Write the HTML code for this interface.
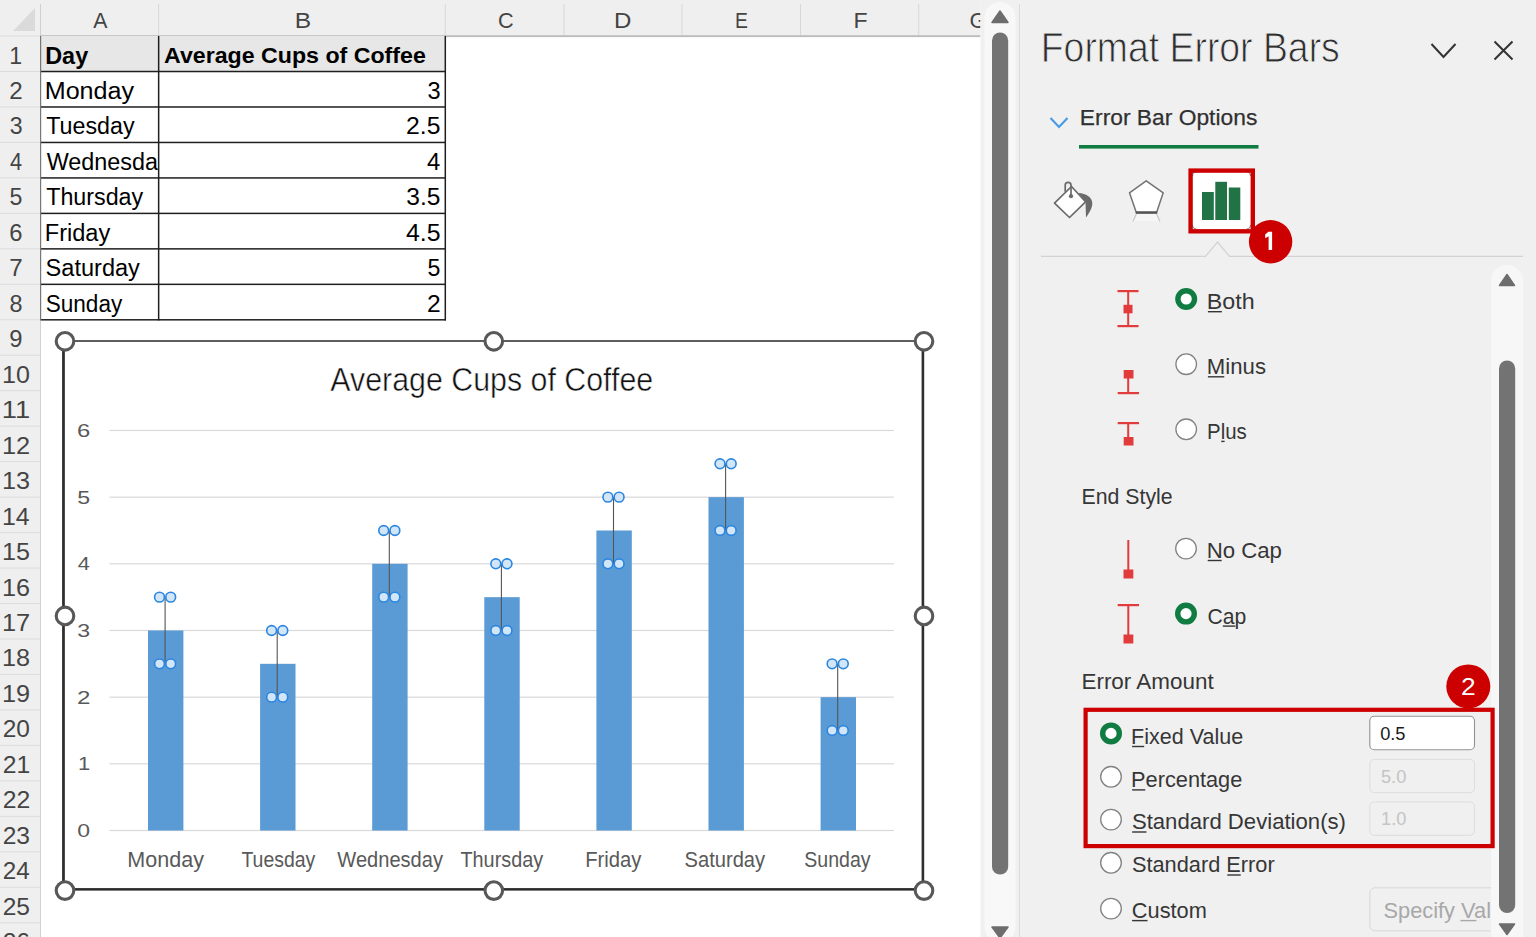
<!DOCTYPE html>
<html><head><meta charset="utf-8"><title>Format Error Bars</title>
<style>html,body{margin:0;padding:0;width:1536px;height:937px;overflow:hidden;background:#fff;font-family:"Liberation Sans", sans-serif}</style>
</head><body><svg width="1536" height="937" viewBox="0 0 1536 937" style="display:block;font-family:'Liberation Sans', sans-serif"><rect x="0" y="0" width="980.5" height="937" fill="#ffffff"/><rect x="0" y="0" width="980.5" height="36.0" fill="#efefef"/><rect x="0" y="0" width="40.5" height="937" fill="#efefef"/><polygon points="13,31 35,8 35,31" fill="#dadada"/><rect x="158.1" y="4" width="1" height="32.0" fill="#d8d8d8"/><rect x="444.75" y="4" width="1" height="32.0" fill="#d8d8d8"/><rect x="563.5" y="4" width="1" height="32.0" fill="#d8d8d8"/><rect x="681.5" y="4" width="1" height="32.0" fill="#d8d8d8"/><rect x="800.0" y="4" width="1" height="32.0" fill="#d8d8d8"/><rect x="918.25" y="4" width="1" height="32.0" fill="#d8d8d8"/><rect x="40" y="4" width="1" height="937" fill="#d0d0d0"/><rect x="40" y="35.2" width="940.5" height="1.9" fill="#bdbdbd"/><rect x="0" y="35.5" width="40" height="1" fill="#dcdcdc"/><rect x="0" y="70.97" width="40" height="1" fill="#dcdcdc"/><rect x="0" y="106.44" width="40" height="1" fill="#dcdcdc"/><rect x="0" y="141.91" width="40" height="1" fill="#dcdcdc"/><rect x="0" y="177.38" width="40" height="1" fill="#dcdcdc"/><rect x="0" y="212.85" width="40" height="1" fill="#dcdcdc"/><rect x="0" y="248.32" width="40" height="1" fill="#dcdcdc"/><rect x="0" y="283.78999999999996" width="40" height="1" fill="#dcdcdc"/><rect x="0" y="319.26" width="40" height="1" fill="#dcdcdc"/><rect x="0" y="354.73" width="40" height="1" fill="#dcdcdc"/><rect x="0" y="390.2" width="40" height="1" fill="#dcdcdc"/><rect x="0" y="425.66999999999996" width="40" height="1" fill="#dcdcdc"/><rect x="0" y="461.14" width="40" height="1" fill="#dcdcdc"/><rect x="0" y="496.61" width="40" height="1" fill="#dcdcdc"/><rect x="0" y="532.0799999999999" width="40" height="1" fill="#dcdcdc"/><rect x="0" y="567.55" width="40" height="1" fill="#dcdcdc"/><rect x="0" y="603.02" width="40" height="1" fill="#dcdcdc"/><rect x="0" y="638.49" width="40" height="1" fill="#dcdcdc"/><rect x="0" y="673.96" width="40" height="1" fill="#dcdcdc"/><rect x="0" y="709.43" width="40" height="1" fill="#dcdcdc"/><rect x="0" y="744.9" width="40" height="1" fill="#dcdcdc"/><rect x="0" y="780.37" width="40" height="1" fill="#dcdcdc"/><rect x="0" y="815.8399999999999" width="40" height="1" fill="#dcdcdc"/><rect x="0" y="851.31" width="40" height="1" fill="#dcdcdc"/><rect x="0" y="886.78" width="40" height="1" fill="#dcdcdc"/><rect x="0" y="922.25" width="40" height="1" fill="#dcdcdc"/><rect x="0" y="957.72" width="40" height="1" fill="#dcdcdc"/><text x="93.25" y="27.5" font-size="22.9" fill="#444444" font-weight="400" textLength="14.20" lengthAdjust="spacingAndGlyphs" >A</text><text x="294.77" y="27.5" font-size="22.9" fill="#444444" font-weight="400" textLength="16.41" lengthAdjust="spacingAndGlyphs" >B</text><text x="497.92" y="27.5" font-size="22.9" fill="#444444" font-weight="400" textLength="15.64" lengthAdjust="spacingAndGlyphs" >C</text><text x="614.02" y="27.5" font-size="22.9" fill="#444444" font-weight="400" textLength="17.37" lengthAdjust="spacingAndGlyphs" >D</text><text x="734.90" y="27.5" font-size="22.9" fill="#444444" font-weight="400" textLength="12.91" lengthAdjust="spacingAndGlyphs" >E</text><text x="853.60" y="27.5" font-size="22.9" fill="#444444" font-weight="400" textLength="14.10" lengthAdjust="spacingAndGlyphs" >F</text><clipPath id="cpg"><rect x="940" y="0" width="40.5" height="36"/></clipPath><text x="969.39" y="27.5" font-size="22.9" fill="#444444" font-weight="400" textLength="17.29" lengthAdjust="spacingAndGlyphs" clip-path="url(#cpg)">G</text><text x="9.27" y="63.5" font-size="23.5" fill="#444444" font-weight="400" textLength="12.86" lengthAdjust="spacingAndGlyphs" >1</text><text x="9.29" y="98.97" font-size="23.5" fill="#444444" font-weight="400" textLength="13.45" lengthAdjust="spacingAndGlyphs" >2</text><text x="9.63" y="134.44" font-size="23.5" fill="#444444" font-weight="400" textLength="12.88" lengthAdjust="spacingAndGlyphs" >3</text><text x="10.01" y="169.91" font-size="23.5" fill="#444444" font-weight="400" textLength="12.11" lengthAdjust="spacingAndGlyphs" >4</text><text x="9.57" y="205.38" font-size="23.5" fill="#444444" font-weight="400" textLength="12.88" lengthAdjust="spacingAndGlyphs" >5</text><text x="9.31" y="240.85" font-size="23.5" fill="#444444" font-weight="400" textLength="13.23" lengthAdjust="spacingAndGlyphs" >6</text><text x="9.29" y="276.32" font-size="23.5" fill="#444444" font-weight="400" textLength="13.45" lengthAdjust="spacingAndGlyphs" >7</text><text x="9.51" y="311.79" font-size="23.5" fill="#444444" font-weight="400" textLength="13.02" lengthAdjust="spacingAndGlyphs" >8</text><text x="9.37" y="347.26" font-size="23.5" fill="#444444" font-weight="400" textLength="13.23" lengthAdjust="spacingAndGlyphs" >9</text><text x="2.02" y="382.73" font-size="23.5" fill="#444444" font-weight="400" textLength="27.88" lengthAdjust="spacingAndGlyphs" >10</text><text x="1.85" y="418.2" font-size="23.5" fill="#444444" font-weight="400" textLength="28.36" lengthAdjust="spacingAndGlyphs" >11</text><text x="2.00" y="453.67" font-size="23.5" fill="#444444" font-weight="400" textLength="28.23" lengthAdjust="spacingAndGlyphs" >12</text><text x="2.01" y="489.14" font-size="23.5" fill="#444444" font-weight="400" textLength="28.02" lengthAdjust="spacingAndGlyphs" >13</text><text x="2.04" y="524.61" font-size="23.5" fill="#444444" font-weight="400" textLength="27.60" lengthAdjust="spacingAndGlyphs" >14</text><text x="2.02" y="560.08" font-size="23.5" fill="#444444" font-weight="400" textLength="27.95" lengthAdjust="spacingAndGlyphs" >15</text><text x="2.01" y="595.55" font-size="23.5" fill="#444444" font-weight="400" textLength="28.02" lengthAdjust="spacingAndGlyphs" >16</text><text x="2.00" y="631.02" font-size="23.5" fill="#444444" font-weight="400" textLength="28.23" lengthAdjust="spacingAndGlyphs" >17</text><text x="2.01" y="666.49" font-size="23.5" fill="#444444" font-weight="400" textLength="28.02" lengthAdjust="spacingAndGlyphs" >18</text><text x="2.01" y="701.96" font-size="23.5" fill="#444444" font-weight="400" textLength="28.09" lengthAdjust="spacingAndGlyphs" >19</text><text x="2.68" y="737.43" font-size="23.5" fill="#444444" font-weight="400" textLength="27.20" lengthAdjust="spacingAndGlyphs" >20</text><text x="2.67" y="772.9" font-size="23.5" fill="#444444" font-weight="400" textLength="27.47" lengthAdjust="spacingAndGlyphs" >21</text><text x="2.66" y="808.37" font-size="23.5" fill="#444444" font-weight="400" textLength="27.53" lengthAdjust="spacingAndGlyphs" >22</text><text x="2.67" y="843.84" font-size="23.5" fill="#444444" font-weight="400" textLength="27.33" lengthAdjust="spacingAndGlyphs" >23</text><text x="2.69" y="879.31" font-size="23.5" fill="#444444" font-weight="400" textLength="26.93" lengthAdjust="spacingAndGlyphs" >24</text><text x="2.67" y="914.78" font-size="23.5" fill="#444444" font-weight="400" textLength="27.26" lengthAdjust="spacingAndGlyphs" >25</text><text x="2.67" y="950.25" font-size="23.5" fill="#444444" font-weight="400" textLength="27.33" lengthAdjust="spacingAndGlyphs" >26</text><rect x="40.5" y="36.0" width="404.75" height="35.47" fill="#e7e7e7"/><rect x="40.5" y="70.77" width="405.45" height="1.5" fill="#1f1f1f"/><rect x="40.5" y="106.24" width="405.45" height="1.5" fill="#1f1f1f"/><rect x="40.5" y="141.71" width="405.45" height="1.5" fill="#1f1f1f"/><rect x="40.5" y="177.18" width="405.45" height="1.5" fill="#1f1f1f"/><rect x="40.5" y="212.65" width="405.45" height="1.5" fill="#1f1f1f"/><rect x="40.5" y="248.12" width="405.45" height="1.5" fill="#1f1f1f"/><rect x="40.5" y="283.59" width="405.45" height="1.5" fill="#1f1f1f"/><rect x="40.5" y="319.06" width="405.45" height="1.5" fill="#1f1f1f"/><rect x="157.9" y="36.0" width="1.5" height="284.46" fill="#1f1f1f"/><rect x="444.55" y="36.0" width="1.5" height="284.46" fill="#1f1f1f"/><rect x="40" y="36.0" width="1.2" height="283.76" fill="#777"/><text x="45.22" y="63.6" font-size="23.0" fill="#000" font-weight="700" textLength="42.94" lengthAdjust="spacingAndGlyphs" >Day</text><text x="164.02" y="62.6" font-size="22.8" fill="#000" font-weight="700" textLength="261.76" lengthAdjust="spacingAndGlyphs" >Average Cups of Coffee</text><text x="44.73" y="98.97" font-size="23.3" fill="#000" font-weight="400" textLength="89.34" lengthAdjust="spacingAndGlyphs" >Monday</text><text x="427.42" y="98.97" font-size="23.0" fill="#000" font-weight="400" textLength="13.11" lengthAdjust="spacingAndGlyphs" >3</text><text x="46.28" y="134.44" font-size="23.3" fill="#000" font-weight="400" textLength="88.30" lengthAdjust="spacingAndGlyphs" >Tuesday</text><text x="406.06" y="134.44" font-size="23.0" fill="#000" font-weight="400" textLength="34.43" lengthAdjust="spacingAndGlyphs" >2.5</text><clipPath id="cpw"><rect x="41" y="142.41" width="116.89999999999999" height="35.47"/></clipPath><text x="46.68" y="169.91" font-size="23.3" fill="#000" font-weight="400" textLength="111.27" lengthAdjust="spacingAndGlyphs" clip-path="url(#cpw)">Wednesda</text><text x="426.97" y="169.91" font-size="23.0" fill="#000" font-weight="400" textLength="13.22" lengthAdjust="spacingAndGlyphs" >4</text><text x="46.18" y="205.38" font-size="23.3" fill="#000" font-weight="400" textLength="97.01" lengthAdjust="spacingAndGlyphs" >Thursday</text><text x="406.38" y="205.38" font-size="23.0" fill="#000" font-weight="400" textLength="34.11" lengthAdjust="spacingAndGlyphs" >3.5</text><text x="44.75" y="240.85" font-size="23.3" fill="#000" font-weight="400" textLength="65.53" lengthAdjust="spacingAndGlyphs" >Friday</text><text x="405.94" y="240.85" font-size="23.0" fill="#000" font-weight="400" textLength="34.56" lengthAdjust="spacingAndGlyphs" >4.5</text><text x="45.64" y="276.32" font-size="23.3" fill="#000" font-weight="400" textLength="94.22" lengthAdjust="spacingAndGlyphs" >Saturday</text><text x="427.57" y="276.32" font-size="23.0" fill="#000" font-weight="400" textLength="12.88" lengthAdjust="spacingAndGlyphs" >5</text><text x="45.68" y="311.79" font-size="23.3" fill="#000" font-weight="400" textLength="76.55" lengthAdjust="spacingAndGlyphs" >Sunday</text><text x="427.07" y="311.79" font-size="23.0" fill="#000" font-weight="400" textLength="13.69" lengthAdjust="spacingAndGlyphs" >2</text><rect x="63.5" y="341.0" width="859.3" height="549.5" fill="#ffffff"/><rect x="62.5" y="340.1" width="861.3" height="1.8" fill="#4d4d4d"/><rect x="62.5" y="888.1" width="861.3" height="2.5" fill="#2a2a2a"/><rect x="62.1" y="341.0" width="2.75" height="549.5" fill="#2e2e2e"/><rect x="921.5999999999999" y="341.0" width="2.6" height="549.5" fill="#2e2e2e"/><text x="330.27" y="390.55" font-size="32.52727272727273" fill="#111111" font-weight="400" textLength="322.93" lengthAdjust="spacingAndGlyphs"  stroke="#ffffff" stroke-width="0.5">Average Cups of Coffee</text><rect x="109.4" y="829.9" width="784.4" height="1.2" fill="#d9d9d9"/><text x="77.28" y="837.1" font-size="19.0" fill="#595959" font-weight="400" textLength="12.81" lengthAdjust="spacingAndGlyphs" >0</text><rect x="109.4" y="763.23" width="784.4" height="1.2" fill="#d9d9d9"/><text x="78.05" y="770.43" font-size="19.0" fill="#595959" font-weight="400" textLength="12.22" lengthAdjust="spacingAndGlyphs" >1</text><rect x="109.4" y="696.56" width="784.4" height="1.2" fill="#d9d9d9"/><text x="76.99" y="703.76" font-size="19.0" fill="#595959" font-weight="400" textLength="13.45" lengthAdjust="spacingAndGlyphs" >2</text><rect x="109.4" y="629.89" width="784.4" height="1.2" fill="#d9d9d9"/><text x="77.33" y="637.09" font-size="19.0" fill="#595959" font-weight="400" textLength="12.88" lengthAdjust="spacingAndGlyphs" >3</text><rect x="109.4" y="563.2199999999999" width="784.4" height="1.2" fill="#d9d9d9"/><text x="77.71" y="570.42" font-size="19.0" fill="#595959" font-weight="400" textLength="12.11" lengthAdjust="spacingAndGlyphs" >4</text><rect x="109.4" y="496.54999999999995" width="784.4" height="1.2" fill="#d9d9d9"/><text x="77.27" y="503.75" font-size="19.0" fill="#595959" font-weight="400" textLength="12.88" lengthAdjust="spacingAndGlyphs" >5</text><rect x="109.4" y="429.88" width="784.4" height="1.2" fill="#d9d9d9"/><text x="77.01" y="437.08" font-size="19.0" fill="#595959" font-weight="400" textLength="13.23" lengthAdjust="spacingAndGlyphs" >6</text><rect x="148.0" y="630.49" width="35.4" height="200.01" fill="#5b9bd5"/><text x="127.32" y="866.6" font-size="21.3" fill="#595959" font-weight="400" textLength="76.64" lengthAdjust="spacingAndGlyphs" >Monday</text><rect x="260.09999999999997" y="663.825" width="35.4" height="166.67499999999995" fill="#5b9bd5"/><text x="241.46" y="866.6" font-size="21.3" fill="#595959" font-weight="400" textLength="73.90" lengthAdjust="spacingAndGlyphs" >Tuesday</text><rect x="372.2" y="563.8199999999999" width="35.4" height="266.68000000000006" fill="#5b9bd5"/><text x="337.30" y="866.6" font-size="21.3" fill="#595959" font-weight="400" textLength="105.66" lengthAdjust="spacingAndGlyphs" >Wednesday</text><rect x="484.29999999999995" y="597.155" width="35.4" height="233.34500000000003" fill="#5b9bd5"/><text x="460.45" y="866.6" font-size="21.3" fill="#595959" font-weight="400" textLength="82.72" lengthAdjust="spacingAndGlyphs" >Thursday</text><rect x="596.3999999999999" y="530.485" width="35.4" height="300.015" fill="#5b9bd5"/><text x="585.23" y="866.6" font-size="21.3" fill="#595959" font-weight="400" textLength="56.14" lengthAdjust="spacingAndGlyphs" >Friday</text><rect x="708.5" y="497.15" width="35.4" height="333.35" fill="#5b9bd5"/><text x="684.59" y="866.6" font-size="21.3" fill="#595959" font-weight="400" textLength="80.56" lengthAdjust="spacingAndGlyphs" >Saturday</text><rect x="820.5999999999999" y="697.16" width="35.4" height="133.34000000000003" fill="#5b9bd5"/><text x="804.32" y="866.6" font-size="21.3" fill="#595959" font-weight="400" textLength="66.21" lengthAdjust="spacingAndGlyphs" >Sunday</text><rect x="164.54999999999998" y="597.155" width="1.1" height="66.67000000000007" fill="#555555"/><circle cx="159.5" cy="597.155" r="4.9" fill="#d3e6f7" stroke="#2b86e0" stroke-width="1.6"/><circle cx="170.7" cy="597.155" r="4.9" fill="#d3e6f7" stroke="#2b86e0" stroke-width="1.6"/><circle cx="159.5" cy="663.825" r="4.9" fill="#d3e6f7" stroke="#2b86e0" stroke-width="1.6"/><circle cx="170.7" cy="663.825" r="4.9" fill="#d3e6f7" stroke="#2b86e0" stroke-width="1.6"/><rect x="276.6499999999999" y="630.49" width="1.1" height="66.66999999999996" fill="#555555"/><circle cx="271.5999999999999" cy="630.49" r="4.9" fill="#d3e6f7" stroke="#2b86e0" stroke-width="1.6"/><circle cx="282.79999999999995" cy="630.49" r="4.9" fill="#d3e6f7" stroke="#2b86e0" stroke-width="1.6"/><circle cx="271.5999999999999" cy="697.16" r="4.9" fill="#d3e6f7" stroke="#2b86e0" stroke-width="1.6"/><circle cx="282.79999999999995" cy="697.16" r="4.9" fill="#d3e6f7" stroke="#2b86e0" stroke-width="1.6"/><rect x="388.74999999999994" y="530.485" width="1.1" height="66.66999999999996" fill="#555555"/><circle cx="383.69999999999993" cy="530.485" r="4.9" fill="#d3e6f7" stroke="#2b86e0" stroke-width="1.6"/><circle cx="394.9" cy="530.485" r="4.9" fill="#d3e6f7" stroke="#2b86e0" stroke-width="1.6"/><circle cx="383.69999999999993" cy="597.155" r="4.9" fill="#d3e6f7" stroke="#2b86e0" stroke-width="1.6"/><circle cx="394.9" cy="597.155" r="4.9" fill="#d3e6f7" stroke="#2b86e0" stroke-width="1.6"/><rect x="500.8499999999999" y="563.8199999999999" width="1.1" height="66.67000000000007" fill="#555555"/><circle cx="495.7999999999999" cy="563.8199999999999" r="4.9" fill="#d3e6f7" stroke="#2b86e0" stroke-width="1.6"/><circle cx="506.99999999999994" cy="563.8199999999999" r="4.9" fill="#d3e6f7" stroke="#2b86e0" stroke-width="1.6"/><circle cx="495.7999999999999" cy="630.49" r="4.9" fill="#d3e6f7" stroke="#2b86e0" stroke-width="1.6"/><circle cx="506.99999999999994" cy="630.49" r="4.9" fill="#d3e6f7" stroke="#2b86e0" stroke-width="1.6"/><rect x="612.9499999999999" y="497.15" width="1.1" height="66.66999999999996" fill="#555555"/><circle cx="607.8999999999999" cy="497.15" r="4.9" fill="#d3e6f7" stroke="#2b86e0" stroke-width="1.6"/><circle cx="619.0999999999999" cy="497.15" r="4.9" fill="#d3e6f7" stroke="#2b86e0" stroke-width="1.6"/><circle cx="607.8999999999999" cy="563.8199999999999" r="4.9" fill="#d3e6f7" stroke="#2b86e0" stroke-width="1.6"/><circle cx="619.0999999999999" cy="563.8199999999999" r="4.9" fill="#d3e6f7" stroke="#2b86e0" stroke-width="1.6"/><rect x="725.0500000000001" y="463.815" width="1.1" height="66.67000000000002" fill="#555555"/><circle cx="720.0" cy="463.815" r="4.9" fill="#d3e6f7" stroke="#2b86e0" stroke-width="1.6"/><circle cx="731.2" cy="463.815" r="4.9" fill="#d3e6f7" stroke="#2b86e0" stroke-width="1.6"/><circle cx="720.0" cy="530.485" r="4.9" fill="#d3e6f7" stroke="#2b86e0" stroke-width="1.6"/><circle cx="731.2" cy="530.485" r="4.9" fill="#d3e6f7" stroke="#2b86e0" stroke-width="1.6"/><rect x="837.15" y="663.825" width="1.1" height="66.66999999999996" fill="#555555"/><circle cx="832.0999999999999" cy="663.825" r="4.9" fill="#d3e6f7" stroke="#2b86e0" stroke-width="1.6"/><circle cx="843.3" cy="663.825" r="4.9" fill="#d3e6f7" stroke="#2b86e0" stroke-width="1.6"/><circle cx="832.0999999999999" cy="730.495" r="4.9" fill="#d3e6f7" stroke="#2b86e0" stroke-width="1.6"/><circle cx="843.3" cy="730.495" r="4.9" fill="#d3e6f7" stroke="#2b86e0" stroke-width="1.6"/><circle cx="65.0" cy="341.3" r="8.8" fill="#ffffff" stroke="#585858" stroke-width="3.1"/><circle cx="493.8" cy="341.3" r="8.8" fill="#ffffff" stroke="#585858" stroke-width="3.1"/><circle cx="924.0" cy="341.3" r="8.8" fill="#ffffff" stroke="#585858" stroke-width="3.1"/><circle cx="65.0" cy="615.95" r="8.8" fill="#ffffff" stroke="#585858" stroke-width="3.1"/><circle cx="924.0" cy="615.95" r="8.8" fill="#ffffff" stroke="#585858" stroke-width="3.1"/><circle cx="65.0" cy="890.6" r="8.8" fill="#ffffff" stroke="#585858" stroke-width="3.1"/><circle cx="493.8" cy="890.6" r="8.8" fill="#ffffff" stroke="#585858" stroke-width="3.1"/><circle cx="924.0" cy="890.6" r="8.8" fill="#ffffff" stroke="#585858" stroke-width="3.1"/><rect x="980.5" y="0" width="39.0" height="937" fill="#f0f0f0"/><rect x="984.5" y="2" width="31" height="940" rx="15.5" fill="#f8f8f8"/><polygon points="1000,11 1008,22.5 992,22.5" fill="#6d6d6d" stroke="#6d6d6d" stroke-width="1.5" stroke-linejoin="round"/><rect x="992" y="32.5" width="16.2" height="842" rx="8.1" fill="#737373"/><polygon points="992,927 1008,927 1000,938" fill="#6d6d6d" stroke="#6d6d6d" stroke-width="1.5" stroke-linejoin="round"/><rect x="1019.5" y="0" width="516.5" height="937" fill="#f0f0f0"/><rect x="1019" y="4" width="1" height="937" fill="#dadada"/><text x="1040.77" y="62.35" font-size="41.60909090909091" fill="#2e2e2e" font-weight="400" textLength="299.03" lengthAdjust="spacingAndGlyphs"  stroke="#f0f0f0" stroke-width="0.9">Format Error Bars</text><polyline points="1431.5,44 1443.5,57 1455.5,44" fill="none" stroke="#333" stroke-width="2"/><path d="M1494.5,41.5 L1512.5,59.5 M1512.5,41.5 L1494.5,59.5" stroke="#333" stroke-width="2"/><polyline points="1050.5,118 1059,127 1067.5,118" fill="none" stroke="#4a9be6" stroke-width="2.2"/><text x="1079.87" y="125.0" font-size="22.9" fill="#303030" font-weight="400" textLength="177.44" lengthAdjust="spacingAndGlyphs" stroke="#303030" stroke-width="0.25">Error Bar Options</text><rect x="1079" y="145" width="179.5" height="3.6" fill="#107c41"/><polygon points="1054.5,203.2 1071.5,186.5 1085.5,201.8 1069.5,217.5" fill="#fff" stroke="#6a6a6a" stroke-width="1.7" stroke-linejoin="round"/><path d="M1065.2,191.8 L1065.2,185.2 A2.9,2.9 0 0 1 1071,185.2 L1071,196" fill="none" stroke="#6a6a6a" stroke-width="1.7"/><circle cx="1071" cy="196.2" r="2.1" fill="#6a6a6a"/><path d="M1078.5,193 L1085.5,201.8 L1086,217.5 C1090,212 1092.5,207 1092.3,203 C1092,197 1086,193.5 1078.5,193 Z" fill="#6a6a6a"/><polygon points="1136.3,214 1156.6,214 1160,221 1133,221" fill="#f6f6f6"/><polygon points="1146.2,180.8 1163.2,192.8 1156.6,212.6 1136.3,212.6 1129.5,192.8" fill="#fff" stroke="#737373" stroke-width="1.5" stroke-linejoin="round"/><rect x="1135.8" y="211.3" width="21.4" height="2.5" fill="#555555"/><path d="M1136.3,214 L1133,221.5 M1156.6,214 L1160,221.5" stroke="#c4c4c4" stroke-width="1.1"/><rect x="1191.5" y="171" width="60" height="60" fill="#fff"/><path d="M1192.5,176 A4,4 0 0 1 1196.5,172 M1246.5,172 A4,4 0 0 1 1250.5,176 M1250.5,225 A4,4 0 0 1 1246.5,229 M1196.5,229 A4,4 0 0 1 1192.5,225" fill="none" stroke="#8a8a8a" stroke-width="1.2"/><rect x="1190.6" y="170.6" width="62.2" height="60.7" fill="none" stroke="#cc0000" stroke-width="4.4"/><rect x="1202" y="192" width="11.8" height="28" fill="#217346"/><rect x="1215.3" y="181.8" width="11.7" height="38.2" fill="#217346"/><rect x="1228.8" y="187.5" width="11.5" height="32.5" fill="#217346"/><polyline points="1041,256.3 1205.5,256.3 1217.5,242 1229.5,256.3 1523,256.3" fill="none" stroke="#d2d2d2" stroke-width="1.2"/><circle cx="1270.6" cy="241.7" r="21.7" fill="#cc0000"/><path d="M1268.3,231.8 L1272.1,231.8 L1272.1,250 L1268.6,250 L1268.6,236.2 L1265.2,238.2 L1265.2,234.6 Z" fill="#ffffff"/><rect x="1491" y="265" width="32" height="690" rx="16" fill="#f7f7f7"/><polygon points="1507,274.5 1514.5,285.5 1499.5,285.5" fill="#6d6d6d" stroke="#6d6d6d" stroke-width="1.5" stroke-linejoin="round"/><rect x="1499" y="360.5" width="16.2" height="552.5" rx="8.1" fill="#737373"/><polygon points="1499.5,924 1514.5,924 1507,934.5" fill="#6d6d6d" stroke="#6d6d6d" stroke-width="1.5" stroke-linejoin="round"/><rect x="1127.2" y="291" width="2" height="36" fill="#e23b3b"/><rect x="1117.5" y="290" width="21" height="2.2" fill="#e23b3b"/><rect x="1117.5" y="325" width="21" height="2.2" fill="#e23b3b"/><rect x="1123.5" y="304.8" width="9" height="8.5" fill="#e23b3b"/><rect x="1127.2" y="372" width="2" height="21" fill="#e23b3b"/><rect x="1123.7" y="370" width="9.8" height="8.5" fill="#e23b3b"/><rect x="1117.7" y="392" width="21.3" height="2.2" fill="#e23b3b"/><rect x="1127.2" y="423" width="2" height="20" fill="#e23b3b"/><rect x="1117.7" y="422" width="21.3" height="2.2" fill="#e23b3b"/><rect x="1123.7" y="437" width="9.8" height="8.5" fill="#e23b3b"/><rect x="1127.3" y="540" width="2" height="34" fill="#e23b3b"/><rect x="1123.5" y="569.5" width="9.8" height="9" fill="#e23b3b"/><rect x="1127.3" y="606" width="2" height="32" fill="#e23b3b"/><rect x="1117.7" y="604" width="21.3" height="2.2" fill="#e23b3b"/><rect x="1123.5" y="634.5" width="9.8" height="9" fill="#e23b3b"/><circle cx="1186.2" cy="299" r="8.3" fill="#fff" stroke="#107c41" stroke-width="5.4"/><text x="1206.78" y="309.1" font-size="22.8" fill="#363636" font-weight="400" textLength="47.82" lengthAdjust="spacingAndGlyphs" >Both</text><rect x="1207.90" y="311.0" width="13.98" height="1.4" fill="#363636"/><circle cx="1186.2" cy="364.2" r="10.3" fill="#fff" stroke="#828282" stroke-width="1.3"/><text x="1206.87" y="374.2" font-size="22.8" fill="#363636" font-weight="400" textLength="59.10" lengthAdjust="spacingAndGlyphs" >Minus</text><rect x="1207.90" y="376.09999999999997" width="16.39" height="1.4" fill="#363636"/><circle cx="1186.2" cy="429.3" r="10.3" fill="#fff" stroke="#828282" stroke-width="1.3"/><text x="1207.02" y="438.8" font-size="22.8" fill="#363636" font-weight="400" textLength="39.71" lengthAdjust="spacingAndGlyphs" >Plus</text><rect x="1221.21" y="440.7" width="3.39" height="1.4" fill="#363636"/><text x="1081.54" y="503.9" font-size="22.8" fill="#363636" font-weight="400" textLength="91.07" lengthAdjust="spacingAndGlyphs" >End Style</text><circle cx="1186" cy="548.6" r="10.3" fill="#fff" stroke="#828282" stroke-width="1.3"/><text x="1206.67" y="557.9" font-size="22.8" fill="#363636" font-weight="400" textLength="75.23" lengthAdjust="spacingAndGlyphs" >No Cap</text><rect x="1207.70" y="559.8" width="13.97" height="1.4" fill="#363636"/><circle cx="1186" cy="613.6" r="8.3" fill="#fff" stroke="#107c41" stroke-width="5.4"/><text x="1207.44" y="623.5" font-size="22.8" fill="#363636" font-weight="400" textLength="38.85" lengthAdjust="spacingAndGlyphs" >Cap</text><rect x="1222.83" y="625.4" width="12.51" height="1.4" fill="#363636"/><text x="1081.45" y="688.5" font-size="22.8" fill="#363636" font-weight="400" textLength="132.25" lengthAdjust="spacingAndGlyphs" >Error Amount</text><circle cx="1111" cy="733.4" r="8.3" fill="#fff" stroke="#107c41" stroke-width="5.4"/><text x="1131.12" y="743.9" font-size="22.8" fill="#363636" font-weight="400" textLength="112.03" lengthAdjust="spacingAndGlyphs" >Fixed Value</text><rect x="1132.10" y="745.8" width="12.09" height="1.4" fill="#363636"/><circle cx="1111" cy="776.8" r="10.3" fill="#fff" stroke="#828282" stroke-width="1.3"/><text x="1131.11" y="787.3" font-size="22.8" fill="#363636" font-weight="400" textLength="111.17" lengthAdjust="spacingAndGlyphs" >Percentage</text><rect x="1132.10" y="789.1999999999999" width="13.17" height="1.4" fill="#363636"/><circle cx="1111" cy="819.6" r="10.3" fill="#fff" stroke="#828282" stroke-width="1.3"/><text x="1131.90" y="829.4" font-size="22.8" fill="#363636" font-weight="400" textLength="214.06" lengthAdjust="spacingAndGlyphs" >Standard Deviation(s)</text><rect x="1132.10" y="831.3" width="14.38" height="1.4" fill="#363636"/><circle cx="1111" cy="862.8" r="10.3" fill="#fff" stroke="#828282" stroke-width="1.3"/><text x="1131.92" y="872.4" font-size="22.8" fill="#363636" font-weight="400" textLength="142.73" lengthAdjust="spacingAndGlyphs" >Standard Error</text><rect x="1227.29" y="874.3" width="13.41" height="1.4" fill="#363636"/><circle cx="1111" cy="908.6" r="10.3" fill="#fff" stroke="#828282" stroke-width="1.3"/><text x="1131.81" y="918.0" font-size="22.8" fill="#363636" font-weight="400" textLength="75.01" lengthAdjust="spacingAndGlyphs" >Custom</text><rect x="1132.10" y="919.9" width="15.43" height="1.4" fill="#363636"/><rect x="1369.8" y="716.3" width="104.7" height="33.4" rx="4.5" fill="#ffffff" stroke="#939393" stroke-width="1.1"/><text x="1380.17" y="740.1" font-size="18.2" fill="#1a1a1a" font-weight="400" textLength="25.36" lengthAdjust="spacingAndGlyphs" >0.5</text><rect x="1369.8" y="759.3" width="104.7" height="33.4" rx="4.5" fill="none" stroke="#dddddd" stroke-width="1"/><text x="1380.97" y="782.7" font-size="18.2" fill="#c4c4c4" font-weight="400" textLength="25.31" lengthAdjust="spacingAndGlyphs" >5.0</text><rect x="1369.8" y="801.9" width="104.7" height="33.4" rx="4.5" fill="none" stroke="#dddddd" stroke-width="1"/><text x="1381.04" y="825.3" font-size="18.2" fill="#c4c4c4" font-weight="400" textLength="25.25" lengthAdjust="spacingAndGlyphs" >1.0</text><clipPath id="cpv"><rect x="1360" y="880" width="131" height="60"/></clipPath><g clip-path="url(#cpv)"><rect x="1369.8" y="887.8" width="140" height="43" rx="5" fill="none" stroke="#d8d8d8" stroke-width="1"/><text x="1383.52" y="918.0" font-size="22.8" fill="#a8a8a8" font-weight="400" textLength="107.47" lengthAdjust="spacingAndGlyphs" >Specify Val</text><rect x="1460.40" y="919.9" width="15.94" height="1.4" fill="#a8a8a8"/></g><rect x="1085.6" y="709.8" width="407" height="136.3" fill="none" stroke="#cc0000" stroke-width="4.2"/><circle cx="1468.3" cy="686.4" r="22" fill="#cc0000"/><text x="1460.98" y="695.0" font-size="24.5" fill="#ffffff" font-weight="400" textLength="14.67" lengthAdjust="spacingAndGlyphs" >2</text></svg></body></html>
